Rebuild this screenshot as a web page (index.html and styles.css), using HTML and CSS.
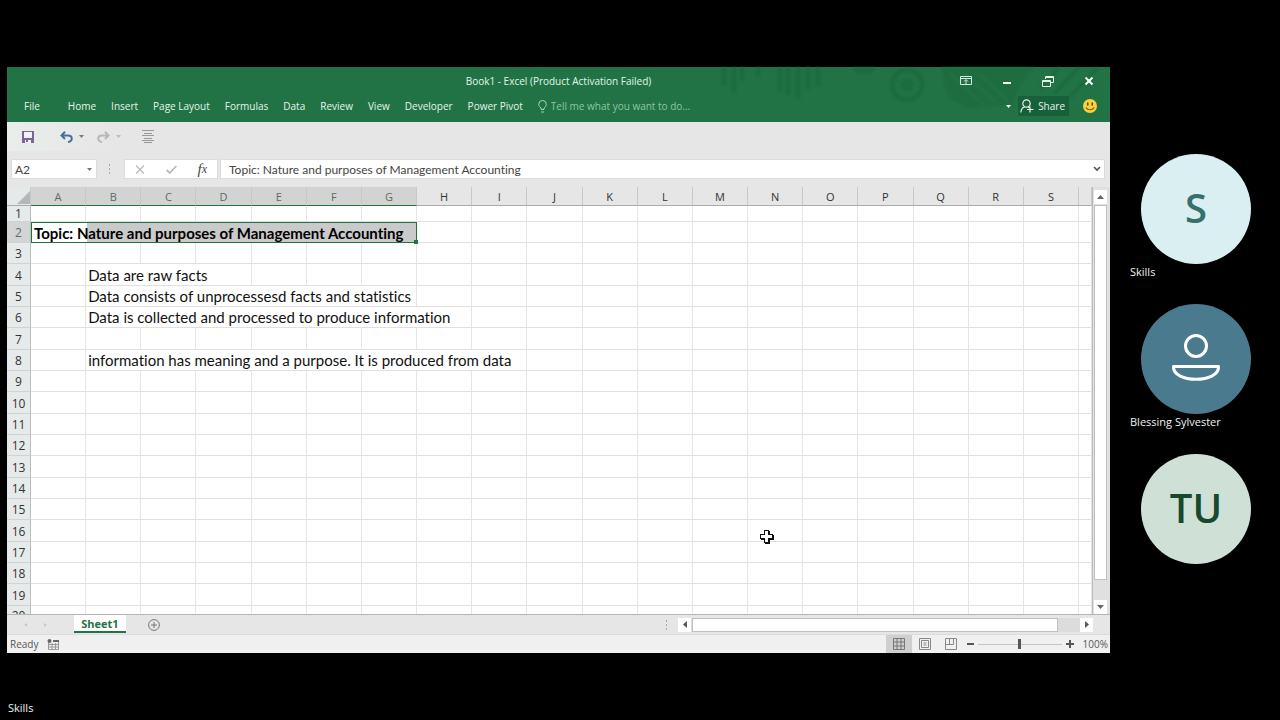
FILE: index.html
```html
<!DOCTYPE html>
<html lang="en">
<head>
<meta charset="utf-8">
<title>Book1 - Excel</title>
<link rel="stylesheet" href="styles.css">
</head>
<body>
<div class="meeting">
<main class="stage">
<section class="excel">
  <header class="ribbon">
    <svg class="ribbon-art" viewBox="0 0 400 55" aria-hidden="true">
      <g fill="none" stroke="#1b683d" stroke-width="5">
        <circle cx="197" cy="18" r="15"/><circle cx="197" cy="18" r="4"/>
        <path d="M14 0v18M24 0v26M32 0v14M48 0v9M70 0v24M78 0v28M88 0v32M98 0v22M108 0v20"/>
      </g>
      <path fill="#1b683d" d="M143 0h22l-4 7h-14z"/>
      <path fill="#1d6b3f" d="M232 0h92l-14 18-8 20-44 4-18-10-6-12z"/>
      <path stroke="#217346" stroke-width="2" d="M240 6l34 32M254 6l32 30M268 6l30 28"/>
      <path stroke="#1b683d" stroke-width="4" d="M330 22l20-22M345 26l24-26M360 30l28-30"/>
    </svg>
    <div class="titlebar">
      <h1 class="title">Book1 - Excel (Product Activation Failed)</h1>
      <div class="window-buttons">
        <button aria-label="Ribbon display options"><svg width="12" height="10" viewBox="0 0 12 10" fill="none" stroke="#d6e8dc"><path d="M.5 .5h11v8h-11zM.5 2.5h11M6 8V4M4 5.500l2-2 2 2"/></svg></button>
        <button aria-label="Minimize"><svg width="12" height="10" viewBox="0 0 12 10"><path fill="#fff" d="M2 6h8v2H2z"/></svg></button>
        <button aria-label="Restore"><svg width="12" height="11" viewBox="0 0 12 11" fill="none" stroke="#e6f2ea"><path d="M3.500 3V.5h8v6H9M3 1.500h8M.5 4.500h8v6h-8zM.5 5.500h8"/></svg></button>
        <button aria-label="Close"><svg width="12" height="10" viewBox="0 0 12 10"><path stroke="#fff" stroke-width="2" d="M2.500 1.500l7 7M9.500 1.500l-7 7"/></svg></button>
      </div>
    </div>
    <nav class="tabs">
      <button class="file">File</button><button>Home</button><button>Insert</button><button>Page Layout</button><button>Formulas</button><button>Data</button><button>Review</button><button>View</button><button>Developer</button><button>Power Pivot</button>
      <label class="tell"><svg width="9" height="13" viewBox="0 0 9 13" fill="none" stroke="#a5d3b5"><path d="M3 9.500V8C1.500 6.800.7 6 .7 4.300a3.800 3.800 0 0 1 7.600 0C8.300 6 7.500 6.800 6 8v1.500zM3 12h3"/></svg><input type="text" aria-label="Tell me" placeholder="Tell me what you want to do..."></label>
      <svg class="share-caret" width="5" height="3" viewBox="0 0 5 3"><path fill="#fff" d="M0 0h5L2.500 3z"/></svg>
      <button class="share"><svg width="14" height="14" viewBox="0 0 14 14" fill="none" stroke="#e6f2ea" stroke-width="1.200"><circle cx="6.500" cy="4.500" r="3.700"/><path d="M.8 13.500c.2-3 1.700-4.800 3.700-5.500M8 7.800l1.500 1M10 7.500v6M7 10.500h6.500"/></svg>Share</button>
      <button class="smile" aria-label="Feedback"><svg width="14" height="14" viewBox="0 0 14 14"><circle cx="7" cy="7" r="7" fill="#fbd13c"/><path fill="#5a4312" d="M4 3.500h1.500v3H4zM8.500 3.500H10v3H8.500z"/><path fill="none" stroke="#7a5a14" stroke-width="1.200" d="M3 8.500c1.500 3 6.500 3 8 0"/></svg></button>
    </nav>
  </header>

  <div class="quick">
    <button aria-label="Save"><svg width="12" height="12" viewBox="0 0 12 12"><path fill="#7d6496" d="M0 0h12v12H0z"/><path fill="#f4f1f7" d="M2 1h8v6H2zM3 9h6v3H3z"/><path fill="#7d6496" d="M4 9h2v2H4z"/></svg></button>
    <button class="undo" aria-label="Undo"><svg width="13" height="12" viewBox="0 0 13 12" fill="none" stroke="#44709c" stroke-width="2"><path d="M5 .8L1.500 4.500 5 8M2 4.500h6c5 0 5 6 0 6.500"/></svg></button>
    <svg class="caret" width="5" height="3" viewBox="0 0 5 3"><path fill="#777" d="M0 0h5L2.500 3z"/></svg>
    <button class="redo" aria-label="Redo"><svg width="13" height="12" viewBox="0 0 13 12" fill="none" stroke="#b8b8b8" stroke-width="2"><path d="M8 .8l3.500 3.700L8 8M11 4.500H5c-5 0-5 6 0 6.500"/></svg></button>
    <svg class="caret" width="5" height="3" viewBox="0 0 5 3"><path fill="#bbb" d="M0 0h5L2.500 3z"/></svg>
    <button class="center" aria-label="Center"><svg width="12" height="13" viewBox="0 0 12 13" stroke="#999"><path d="M0 .5h12M2 3.500h8M0 5.500h12M2 8.500h8M0 10.500h12M2 12.500h8"/></svg></button>
  </div>

  <div class="formula-row">
    <label class="name-box"><input type="text" aria-label="Name box" value="A2"><svg width="5" height="3" viewBox="0 0 5 3"><path fill="#777" d="M0 0h5L2.500 3z"/></svg></label>
    <svg class="dots" width="2" height="11" viewBox="0 0 2 11"><path fill="#aaa" d="M0 0h1v2H0zM0 4h1v2H0zM0 8h1v2H0z"/></svg>
    <div class="fx-box">
      <button aria-label="Cancel"><svg width="10" height="9" viewBox="0 0 10 9" stroke="#bbb" stroke-width="1.300"><path d="M1 .5l8 8M9 .5l-8 8"/></svg></button>
      <button aria-label="Enter"><svg width="11" height="9" viewBox="0 0 11 9" fill="none" stroke="#bbb" stroke-width="1.800"><path d="M.7 5l3 3L10.300 1"/></svg></button>
      <button class="fx" aria-label="Insert function"><i>f</i><i class="x">x</i></button>
    </div>
    <label class="formula"><input type="text" aria-label="Formula bar" value="Topic: Nature and purposes of Management Accounting"><svg width="8" height="6" viewBox="0 0 8 6" fill="none" stroke="#555" stroke-width="1.600"><path d="M1 1l3 3 3-3"/></svg></label>
  </div>

  <div class="sheet">
    <div class="grid-clip">
    <table class="grid">
      <colgroup><col class="c-head"><col span="19"><col class="c-rest"></colgroup>
      <thead><tr><th class="corner"><svg width="13" height="13" viewBox="0 0 13 13"><path fill="#b5b8b8" d="M13 0v13H0z"/></svg></th><th class="sel">A</th><th class="sel">B</th><th class="sel">C</th><th class="sel">D</th><th class="sel">E</th><th class="sel">F</th><th class="sel">G</th><th>H</th><th>I</th><th>J</th><th>K</th><th>L</th><th>M</th><th>N</th><th>O</th><th>P</th><th>Q</th><th>R</th><th>S</th><th></th></tr></thead>
      <tbody>
      <tr class="first"><th>1<td><td><td><td><td><td><td><td><td><td><td><td><td><td><td><td><td><td><td><td>
      <tr><th class="sel">2<td class="topic" colspan="7">Topic: Nature and purposes of Management Accounting<span class="handle"></span><td><td><td><td><td><td><td><td><td><td><td><td><td>
      <tr><th>3<td><td><td><td><td><td><td><td><td><td><td><td><td><td><td><td><td><td><td><td>
      <tr><th>4<td><td colspan="3">Data are raw facts<td><td><td><td><td><td><td><td><td><td><td><td><td><td><td><td>
      <tr><th>5<td><td colspan="6">Data consists of unprocessesd facts and statistics<td><td><td><td><td><td><td><td><td><td><td><td><td>
      <tr><th>6<td><td colspan="7">Data is collected and processed to produce information<td><td><td><td><td><td><td><td><td><td><td><td>
      <tr><th>7<td><td><td><td><td><td><td><td><td><td><td><td><td><td><td><td><td><td><td><td>
      <tr><th>8<td><td colspan="8">information has meaning and a purpose. It is produced from data<td><td><td><td><td><td><td><td><td><td><td>
      <tr><th>9<td><td><td><td><td><td><td><td><td><td><td><td><td><td><td><td><td><td><td><td>
      <tr><th>10<td><td><td><td><td><td><td><td><td><td><td><td><td><td><td><td><td><td><td><td>
      <tr><th>11<td><td><td><td><td><td><td><td><td><td><td><td><td><td><td><td><td><td><td><td>
      <tr><th>12<td><td><td><td><td><td><td><td><td><td><td><td><td><td><td><td><td><td><td><td>
      <tr><th>13<td><td><td><td><td><td><td><td><td><td><td><td><td><td><td><td><td><td><td><td>
      <tr><th>14<td><td><td><td><td><td><td><td><td><td><td><td><td><td><td><td><td><td><td><td>
      <tr><th>15<td><td><td><td><td><td><td><td><td><td><td><td><td><td><td><td><td><td><td><td>
      <tr><th>16<td><td><td><td><td><td><td><td><td><td><td><td><td><td><td><td><td><td><td><td>
      <tr><th>17<td><td><td><td><td><td><td><td><td><td><td><td><td><td><td><td><td><td><td><td>
      <tr><th>18<td><td><td><td><td><td><td><td><td><td><td><td><td><td><td><td><td><td><td><td>
      <tr><th>19<td><td><td><td><td><td><td><td><td><td><td><td><td><td><td><td><td><td><td><td>
      <tr class="last"><th>20<td><td><td><td><td><td><td><td><td><td><td><td><td><td><td><td><td><td><td><td>
      </tbody>
    </table>
    </div>
    <div class="vscroll">
      <button aria-label="Scroll up"><svg width="7" height="4" viewBox="0 0 7 4"><path fill="#666" d="M0 4h7L3.500 0z"/></svg></button>
      <div class="vthumb"></div>
      <button aria-label="Scroll down"><svg width="7" height="4" viewBox="0 0 7 4"><path fill="#666" d="M0 0h7L3.500 4z"/></svg></button>
    </div>
  </div>

  <div class="sheet-tabs">
    <div class="tab-arrows"><svg width="25" height="6" viewBox="0 0 25 6"><path fill="#c8c8c8" d="M4 1v4L1 3zM21 1v4l3-2z"/></svg></div>
    <button class="sheet-tab">Sheet1</button>
    <button class="add" aria-label="New sheet"><svg width="12" height="12" viewBox="0 0 12 12" fill="none" stroke="#777"><circle cx="6" cy="6" r="5.400"/><path d="M6 3v6M3 6h6"/></svg></button>
    <svg class="split" width="2" height="10" viewBox="0 0 2 10"><path fill="#aaa" d="M0 0h1v2H0zM0 4h1v2H0zM0 8h1v2H0z"/></svg>
    <div class="hscroll">
      <button aria-label="Scroll left"><svg width="4" height="7" viewBox="0 0 4 7"><path fill="#555" d="M4 0v7L0 3.500z"/></svg></button>
      <div class="hthumb"></div>
      <button aria-label="Scroll right"><svg width="4" height="7" viewBox="0 0 4 7"><path fill="#555" d="M0 0v7l4-3.500z"/></svg></button>
    </div>
  </div>

  <footer class="status">
    <span class="ready">Ready</span>
    <button class="macro" aria-label="Record macro"><svg width="12" height="11" viewBox="0 0 12 11"><path fill="none" stroke="#999" d="M1.500 3v7.500h10V3M1.500 5.500h10M1.500 8h10M5 4v6M8.500 4v6"/><circle cx="2.500" cy="2" r="2" fill="#666"/><path fill="#666" d="M6 1h6v2H6z"/></svg></button>
    <div class="views">
      <button class="on" aria-label="Normal view"><svg width="12" height="12" viewBox="0 0 12 12" fill="none" stroke="#777"><path d="M.5 .5h11v11H.5zM4 .5v11M8 .5v11M.5 4h11M.5 8h11"/></svg></button>
      <button aria-label="Page layout view"><svg width="12" height="12" viewBox="0 0 12 12" fill="none" stroke="#888"><path d="M.5 .5h11v11H.5zM2.500 2.500h7v7h-7zM4.500 5h3M4.500 7h3"/></svg></button>
      <button aria-label="Page break view"><svg width="12" height="12" viewBox="0 0 12 12" fill="none" stroke="#888"><path d="M.5 .5h11v11H.5zM4.500 .5v6M8.500 .5v6M.5 6.500h8"/></svg></button>
    </div>
    <button class="zoom-btn" aria-label="Zoom out"><svg width="7" height="8" viewBox="0 0 7 8"><path fill="#555" d="M0 3h7v2H0z"/></svg></button>
    <input class="zoom" type="range" min="0" max="100" value="50" aria-label="Zoom">
    <button class="zoom-btn" aria-label="Zoom in"><svg width="8" height="8" viewBox="0 0 8 8"><path fill="#555" d="M0 3h3V0h2v3h3v2H5v3H3V5H0z"/></svg></button>
    <span class="percent">100%</span>
  </footer>
</section>
<p class="presenter">Skills</p>
</main>

<aside class="people">
  <figure class="person"><div class="avatar mint">S</div><figcaption>Skills</figcaption></figure>
  <figure class="person"><div class="avatar blue"><svg width="50" height="50" viewBox="0 0 50 50" fill="none" stroke="#fff" stroke-width="3"><circle cx="25" cy="13" r="10.500"/><path stroke-linejoin="round" d="M2.500 33.500h45c1 17-46 17-45 0z"/></svg></div><figcaption>Blessing Sylvester</figcaption></figure>
  <figure class="person"><div class="avatar sage">TU</div></figure>
</aside>
<svg class="pointer" width="14" height="14" viewBox="0 0 14 14"><path fill="#111" d="M5 1h5v4h4v5h-4v4H5v-4H1V5h4z"/><path fill="#111" d="M4 0h5v4h4v5H9v4H4V9H0V4h4z"/><path fill="#fff" d="M5 1h3v4h4v3H8v4H5V8H1V5h4z"/></svg>
</div>
</body>
</html>
```
FILE: styles.css
```css
* { box-sizing: border-box; }
body { margin: 0; background: #000; font-family: "Open Sans", "Noto Sans", sans-serif; font-size: 10px; font-variant-ligatures: none; }
button { display: flex; align-items: center; justify-content: center; margin: 0; padding: 0; border: 0; background: none; font: inherit; color: inherit; }
input { font: inherit; color: inherit; border: 0; background: none; padding: 0; min-width: 0; outline: 0; }
svg { display: block; flex: none; }

.meeting { position: relative; display: flex; min-height: 100vh; height: 100vh; }
.stage { flex: 1; min-width: 0; display: flex; flex-direction: column; padding: 67px 0 4px 7px; }
.excel { flex: 1; min-height: 0; display: flex; flex-direction: column; background: #e6e6e6; color: #444; }

.ribbon { position: relative; background: #217346; color: #e6f3ea; height: 55px; }
.ribbon-art { position: absolute; right: 0; top: 0; width: 400px; height: 55px; filter: blur(1px); opacity: .7; }
.titlebar { position: relative; display: flex; justify-content: flex-end; align-items: center; height: 28px; }
.title { flex: 1; margin: 0; padding-left: 150px; font-size: 10px; font-weight: 400; text-align: center; }
.window-buttons { display: flex; gap: 29px; padding-right: 15px; }
.tabs { position: relative; display: flex; align-items: center; gap: 15px; height: 22px; padding: 0 13px 0 17px; }
.tabs button { white-space: nowrap; }
.tabs .file { margin-right: 13px; }
.tell { flex: 1; display: flex; align-items: center; gap: 4px; }
.tell input { flex: 1; }
.tell input::placeholder { color: #8fc4a3; opacity: 1; }
.share-caret { margin-right: -8px; }
.tabs .share { gap: 4px; height: 20px; padding: 0 4px 0 2px; background: #16613a; }
.tabs .smile { margin-left: -1px; }

.quick { display: flex; align-items: center; height: 29px; padding-left: 15px; background: linear-gradient(90deg, #e9eeea, #e6e6e6 10%); }
.undo { margin-left: 26px; }
.caret { margin-left: 6px; }
.redo { margin-left: 13px; }
.center { margin-left: 21px; }

.formula-row { display: flex; align-items: center; height: 36px; padding: 2px 5px 2px 4px; font-family: Lato, sans-serif; font-size: 12px; }
.name-box, .fx-box, .formula { display: flex; align-items: center; height: 20px; background: #fff; border: 1px solid #dcdcdc; }
.name-box { width: 86px; padding: 0 4px 0 3px; }
.name-box input, .formula input { flex: 1; }
.dots { margin: 0 13px 0 12px; }
.fx-box { width: 94px; justify-content: space-between; padding: 0 10px; }
.fx { font-family: "Liberation Serif", serif; font-size: 15px; line-height: 16px; }
.fx .x { font-size: 12px; }
.formula { flex: 1; margin-left: 2px; padding: 0 3px 0 8px; }

.sheet { flex: 1; min-height: 0; display: flex; border-bottom: 1px solid #b5b5b5; }
.grid-clip { flex: 1; min-width: 0; overflow: hidden; border-right: 1px solid #bbb; background: #fff; }
.grid { width: 100%; table-layout: fixed; border-collapse: separate; border-spacing: 0; font-family: Lato, sans-serif; font-size: 15px; line-height: 18px; color: #111; }
.c-head { width: 24px; }
.c-rest { width: 13px; }
.grid th { padding: 2px 0 0; font: 400 12px/16px "Open Sans", sans-serif; color: #333; }
.grid thead th { height: 19px; font-size: 11px; background: #e6e6e6; border-right: 1px solid #c8c8c8; border-bottom: 1px solid #ababab; }
.grid thead th.sel { background: #d2d4d3; color: #5e6b64; border-bottom-color: #217346; }
.grid thead .corner { background: #e6e9e9; }
.corner svg { margin-left: 10px; }
.grid tbody th { height: 21px; background: #e7eaeb; border-right: 1px solid #b9bdbc; border-bottom: 1px solid #d0d3d3; }
.grid tbody th.sel { background: #d2d5d4; color: #5e6b64; }
.grid td { padding: 0 2px; border-right: 1px solid #e8e3e8; border-bottom: 1px solid #e2dfe2; white-space: nowrap; }
.grid tbody tr:nth-child(3n+1) th { height: 22px; }
.grid tbody tr.first th { height: 16px; padding: 0; line-height: 14px; }
.grid tbody tr.last th { padding: 0; }
.grid .topic { position: relative; font-weight: 700; color: #000; background: linear-gradient(90deg, #fff 0 14.3%, #c9cac9 14.3%); border: 1px solid #217346; }
.handle { position: absolute; right: -2px; bottom: -2px; width: 4px; height: 4px; background: #217346; }

.vscroll { display: flex; flex-direction: column; width: 17px; padding: 3px 3px 0 1px; background: #e0e0e0; }
.vscroll button { height: 14px; background: #fff; }
.vthumb { flex: 1; margin: 1px 0 20px; background: #fff; border: 1px solid #c0c0c0; }

.sheet-tabs { display: flex; align-items: center; height: 19px; }
.tab-arrows { width: 67px; padding-left: 16px; }
.sheet-tab { width: 52px; height: 18px; align-self: flex-start; background: #fff; color: #217346; border-bottom: 2px solid #217346; font-size: 11px; font-weight: 700; }
.add { margin-left: 22px; }
.split { margin-left: auto; margin-right: 10px; }
.hscroll { display: flex; width: 39%; max-width: 415px; height: 14px; margin-right: 17px; background: #dcdcdc; }
.hscroll button { width: 13px; background: #fff; }
.hthumb { flex: 1; margin: 0 22px 0 1px; background: #fff; border: 1px solid #c0c0c0; }

.status { display: flex; align-items: center; height: 19px; padding: 0 2px 0 3px; background: #f1f0f1; border-top: 1px solid #dcdcdc; color: #555; }
.macro { margin-left: 9px; }
.views { display: flex; align-self: stretch; margin-left: auto; margin-right: 3px; }
.views button { width: 26px; }
.views .on { background: #cfcfcf; }
.zoom { appearance: none; width: 84px; height: 12px; margin: 0 4px; background: linear-gradient(#c4c4c4, #c4c4c4) center / 100% 1px no-repeat; }
.zoom::-webkit-slider-thumb { appearance: none; width: 3px; height: 10px; background: #555; }
.percent { margin-left: 9px; }

.presenter { margin: 46px 0 0 1px; font-size: 11px; line-height: 17px; color: #f0f0f0; }

.people { width: 170px; padding: 154px 0 0 20px; }
.person { margin: 0; height: 150px; }
.avatar { display: flex; align-items: center; justify-content: center; width: 110px; height: 110px; margin-left: 11px; border-radius: 50%; font-size: 40px; font-weight: 600; line-height: 52px; padding-bottom: 3px; }
.mint { background: #daeff1; color: #37706b; }
.blue { background: #497a8e; }
.sage { background: #cfe1d6; color: #18482d; }
.person figcaption { font-size: 11px; line-height: 16px; color: #f0f0f0; }
.pointer { position: absolute; left: 760px; top: 530px; }
```
